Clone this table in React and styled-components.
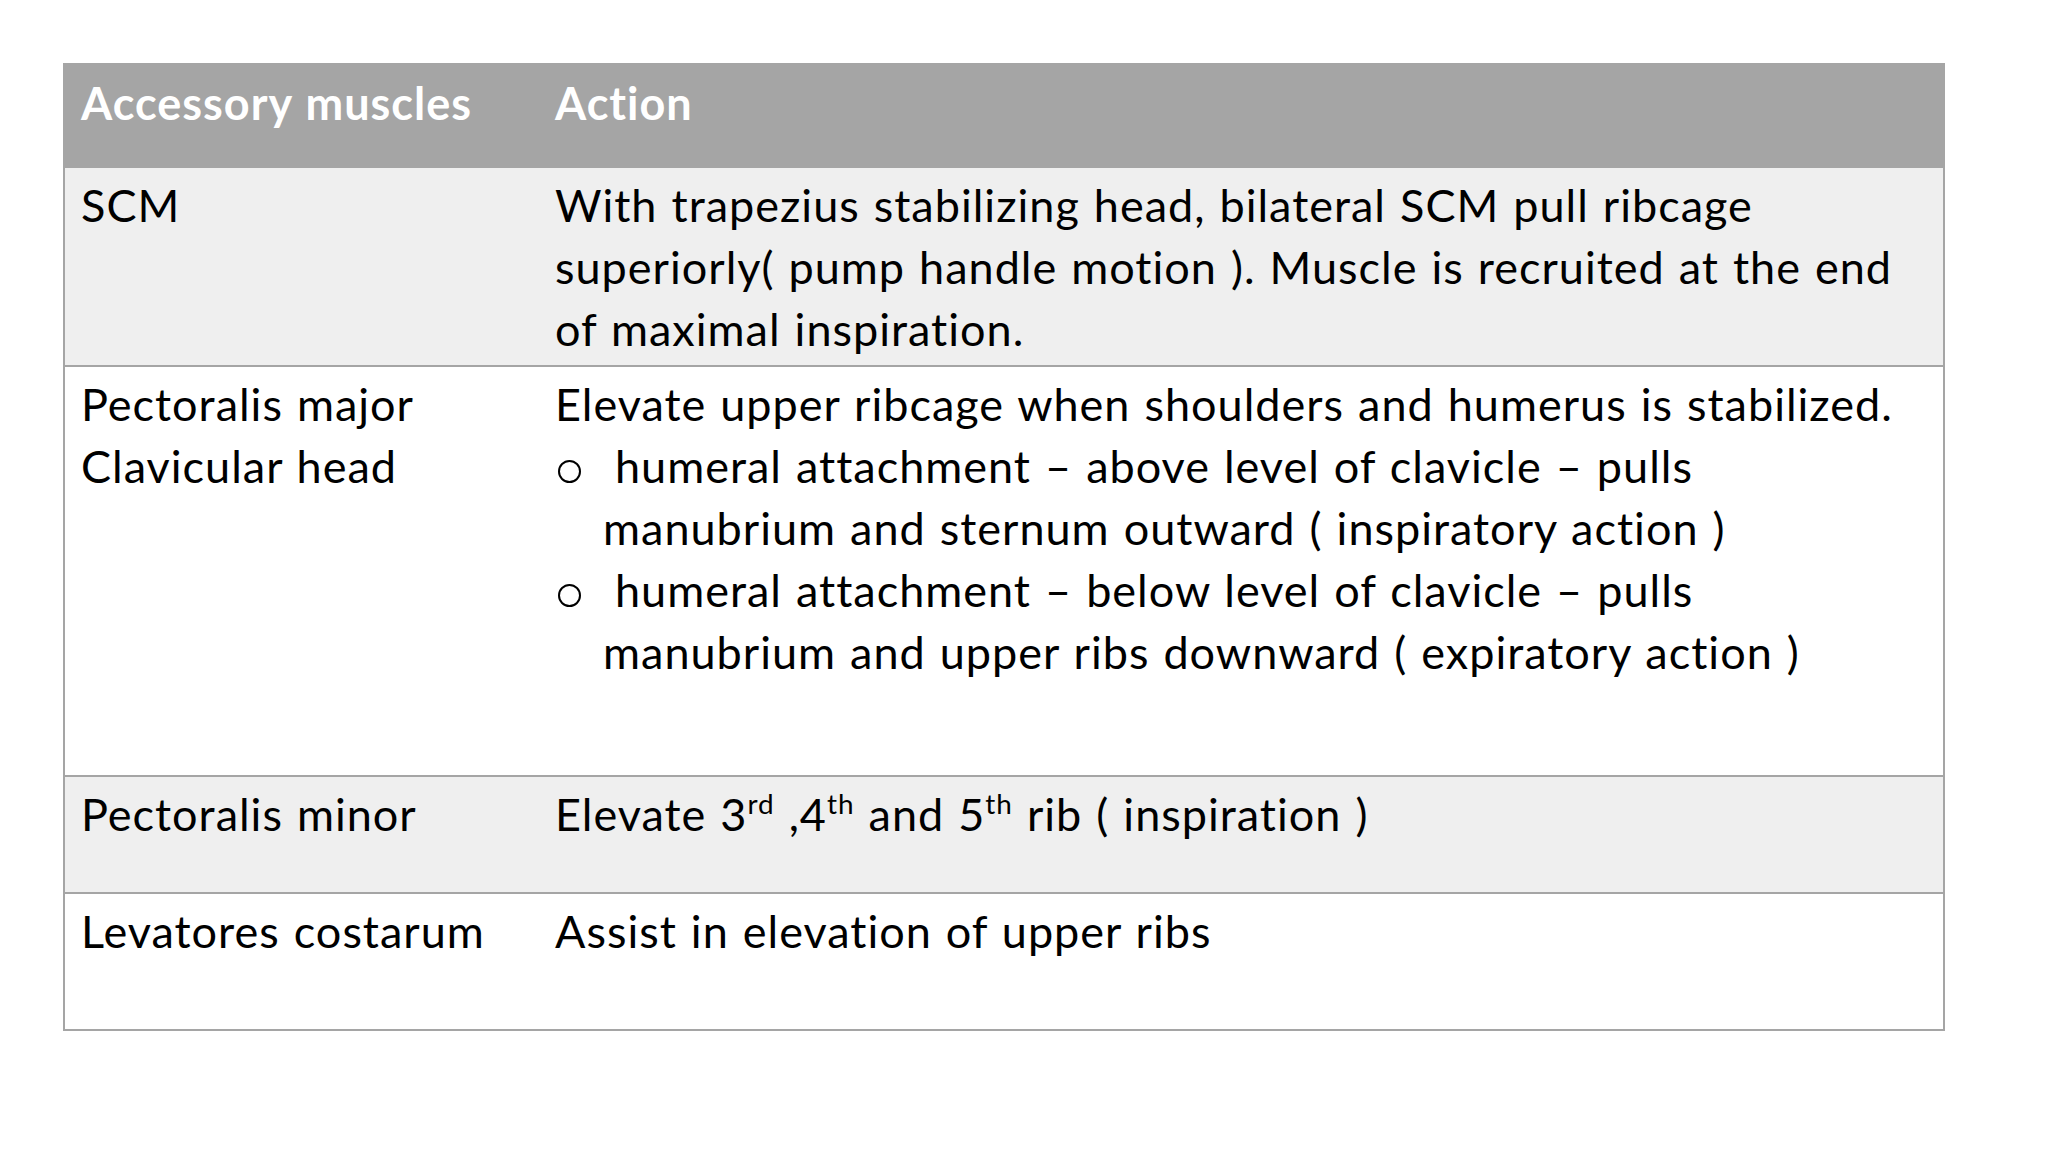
import React from "react";
import styled, { createGlobalStyle } from "styled-components";

const GlobalStyle = createGlobalStyle`
  html, body {
    margin: 0;
    padding: 0;
    background: #ffffff;
  }
  body {
    font-family: Lato, "Open Sans", sans-serif;
    color: #000000;
  }
`;

const GRAY = "#a5a5a5";
const LIGHT = "#efefef";

const Page = styled.div`
  width: 2048px;
  height: 1152px;
  padding: 63px 0 0 63px;
  box-sizing: border-box;
`;

const Table = styled.div`
  width: 1882px;
  display: flex;
  flex-direction: column;
  border-left: 2px solid ${GRAY};
  border-right: 2px solid ${GRAY};
  box-sizing: border-box;
`;

const Row = styled.div`
  display: grid;
  grid-template-columns: 474px 1fr;
  height: ${(p) => p.$height}px;
  box-sizing: border-box;
  background: ${(p) => (p.$head ? GRAY : p.$shade ? LIGHT : "#ffffff")};
  border-bottom: ${(p) => (p.$head ? "none" : `2px solid ${GRAY}`)};
`;

const Cell = styled.div`
  padding: ${(p) => (p.$head ? "9px" : "6px")} 12px 0 16px;
  font-size: 45px;
  line-height: 62px;
  letter-spacing: 1px;
  word-spacing: 1.5px;
  font-variant-ligatures: none;
  font-weight: ${(p) => (p.$head ? 700 : 400)};
  color: ${(p) => (p.$head ? "#ffffff" : "#000000")};
  white-space: nowrap;
`;

const Line = styled.div``;

const Sup = styled.sup`
  font-size: 0.62em;
  line-height: 0;
  vertical-align: 0.62em;
`;

const Bullet = styled.div`
  display: flex;
`;

const Marker = styled.span`
  flex: 0 0 48px;
`;

const Ring = styled.span`
  display: inline-block;
  width: 19px;
  height: 19px;
  margin-left: 3px;
  border: 2px solid #000000;
  border-radius: 50%;
`;

const BulletText = styled.div`
  text-indent: 12px;
`;

export default function App() {
  return (
    <>
      <GlobalStyle />
      <Page>
        <Table>
          <Row $head $height={105}>
            <Cell $head>Accessory muscles</Cell>
            <Cell $head>Action</Cell>
          </Row>

          <Row $shade $height={199}>
            <Cell>SCM</Cell>
            <Cell>
              <Line>With trapezius stabilizing head, bilateral SCM pull ribcage</Line>
              <Line>superiorly( pump handle motion ). Muscle is recruited at the end</Line>
              <Line>of maximal inspiration.</Line>
            </Cell>
          </Row>

          <Row $height={410}>
            <Cell>
              <Line>Pectoralis major</Line>
              <Line>Clavicular head</Line>
            </Cell>
            <Cell>
              <Line>Elevate upper ribcage when shoulders and humerus is stabilized.</Line>
              <Bullet>
                <Marker>
                  <Ring />
                </Marker>
                <BulletText>
                  humeral attachment – above level of clavicle – pulls
                  <br />
                  manubrium and sternum outward ( inspiratory action )
                </BulletText>
              </Bullet>
              <Bullet>
                <Marker>
                  <Ring />
                </Marker>
                <BulletText>
                  humeral attachment – below level of clavicle – pulls
                  <br />
                  manubrium and upper ribs downward ( expiratory action )
                </BulletText>
              </Bullet>
            </Cell>
          </Row>

          <Row $shade $height={117}>
            <Cell>Pectoralis minor</Cell>
            <Cell>
              Elevate 3<Sup>rd</Sup> ,4<Sup>th</Sup> and 5<Sup>th</Sup> rib ( inspiration )
            </Cell>
          </Row>

          <Row $height={137}>
            <Cell>Levatores costarum</Cell>
            <Cell>Assist in elevation of upper ribs</Cell>
          </Row>
        </Table>
      </Page>
    </>
  );
}
